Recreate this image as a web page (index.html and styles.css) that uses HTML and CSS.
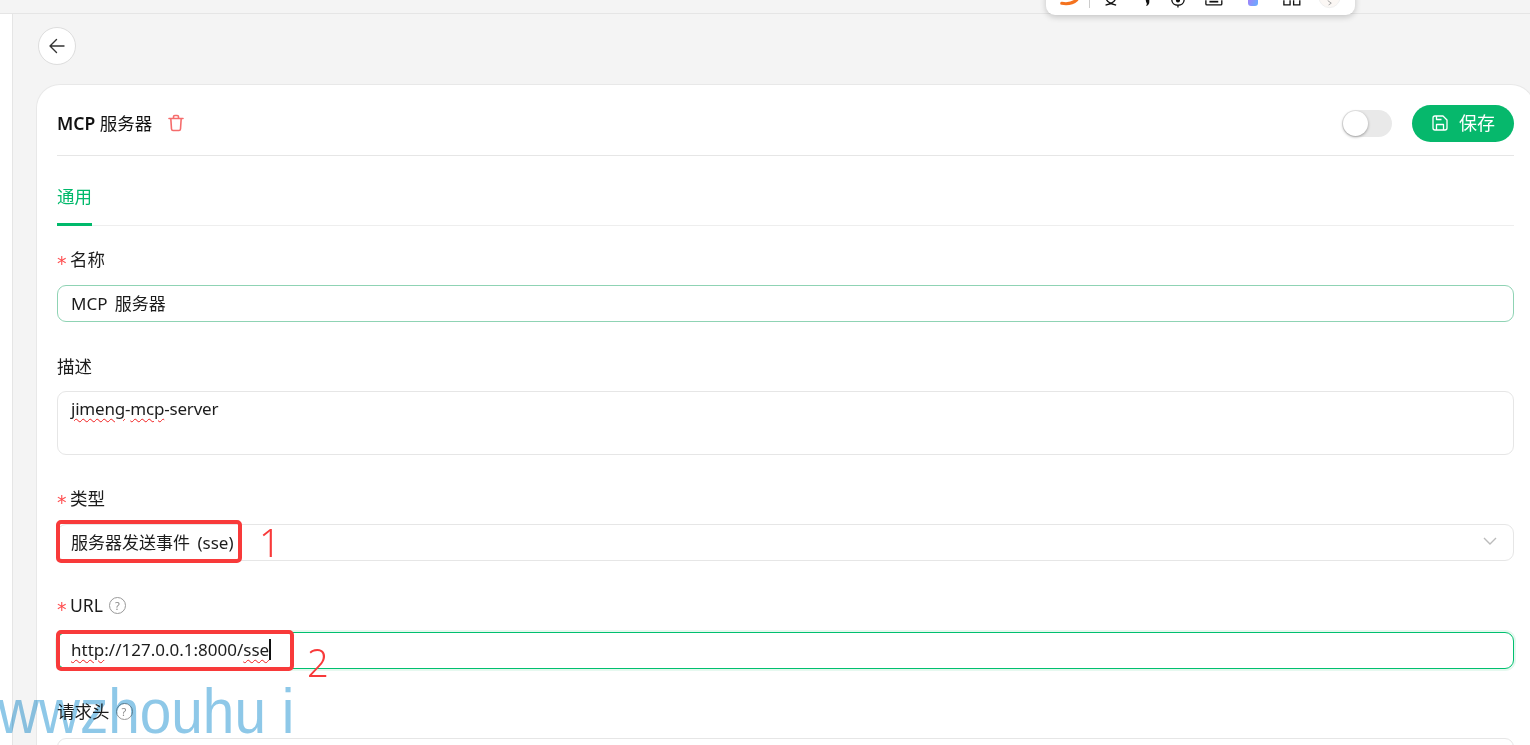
FILE: index.html
```html
<!DOCTYPE html>
<html lang="zh-CN">
<head>
  <meta charset="UTF-8" />
  <meta name="viewport" content="width=device-width, initial-scale=1.0"/>
  <title>MCP 服务器</title>
  <link rel="stylesheet" href="styles.css">
</head>
<body>
  <div class="topbar"></div>

  <div class="layout">
    <div class="sidebar"></div>
    <main class="main">
      <button class="back-btn" aria-label="back">
        <svg width="18" height="18" viewBox="0 0 18 18" fill="none" stroke="#333" stroke-width="1.4" stroke-linecap="round" stroke-linejoin="round"><path d="M16 9H2M8.500 2.500L2 9l6.500 6.500"/></svg>
      </button>

      <section class="card">
        <header class="card-head">
          <div class="title"><b>MCP</b> 服务器</div>
          <svg class="trash" width="16" height="18" viewBox="0 0 16 18" fill="none" stroke="#f56c6c" stroke-width="1.600" stroke-linejoin="round" stroke-linecap="round"><path d="M1 4.500h14M5.500 4.500V2.800c0-.8.500-1.300 1.300-1.300h2.400c.8 0 1.300.5 1.300 1.300v1.700M2.800 4.500l.7 10.500c.1.900.6 1.500 1.500 1.500h6c.9 0 1.400-.6 1.500-1.500l.7-10.500"/></svg>
          <div class="spacer"></div>
          <div class="toggle"><span class="knob"></span></div>
          <button class="save-btn">
            <svg width="16" height="16" viewBox="0 0 16 16" fill="none" stroke="#fff" stroke-width="1.300" stroke-linejoin="round"><path d="M1 3c0-1.100.9-2 2-2h8l4 4v8c0 1.100-.9 2-2 2H3c-1.100 0-2-.9-2-2z"/><path d="M4.500 15V9.500h7V15M4.500 1v3.500h5"/></svg>
            <span>保存</span>
          </button>
        </header>

        <nav class="tabs">
          <div class="tab active">通用</div>
        </nav>

        <form class="form">
          <div class="row">
            <label class="label"><span class="star">*</span>名称</label>
            <div class="input input-hover">MCP 服务器</div>
          </div>
          <div class="row row-desc">
            <label class="label">描述</label>
            <div class="input textarea"><span class="typo">jimeng</span>-<span class="typo">mcp</span>-server</div>
          </div>
          <div class="row">
            <label class="label"><span class="star">*</span>类型</label>
            <div class="input select">
              <span>服务器发送事件 (sse)</span>
              <svg class="chevron" width="14" height="8" viewBox="0 0 14 8" fill="none" stroke="#bbb" stroke-width="1.400"><path d="M1 1l6 6 6-6"/></svg>
            </div>
          </div>
          <div class="row row-url">
            <label class="label"><span class="star">*</span>URL<span class="help">?</span></label>
            <div class="input input-focus"><span class="typo">http</span>://127.0.0.1:8000/<span class="typo">sse</span><span class="caret"></span></div>
          </div>
          <div class="row row-last">
            <label class="label">请求头<span class="help">?</span></label>
            <div class="input input-cut"></div>
          </div>
        </form>
      </section>
    </main>
  </div>

  <!-- floating browser extension bar, cut by the top of the window -->
  <div class="ext-bar">
    <svg class="ext-logo" width="22" height="8" viewBox="0 0 22 8" fill="none" stroke="#f4721e" stroke-width="3.500" stroke-linecap="round"><path d="M2 5.500c6 1 12 .5 17-4"/></svg>
    <span class="ext-sep"></span>
    <svg width="20" height="7" viewBox="0 0 20 7" fill="none" stroke="#111" stroke-width="1.500"><path d="M5 0c1 3 5 5 11 6.500M15 0c-1 3-5 5-11 6.500"/></svg>
    <svg class="ext-comma" width="8" height="8" viewBox="0 0 8 8" fill="#111"><path d="M2 0h4v3c0 2-1 3.500-3 4.500l-.5-.5C3 6 3.500 5 3 4 2.500 3 2 2 2 0z"/></svg>
    <svg class="ext-mic" width="18" height="9" viewBox="0 0 18 9" fill="none" stroke="#111" stroke-width="1.500"><path d="M2 0c0 4 3 6.500 7 6.500S16 4 16 0M9 6.500V9"/><circle cx="9" cy="1" r="2.300" fill="#111" stroke="none"/></svg>
    <svg width="20" height="6" viewBox="0 0 20 6" fill="none" stroke="#111" stroke-width="1.500"><path d="M1 0v4c0 .8.500 1.200 1.200 1.200h15.600c.7 0 1.200-.4 1.200-1.200V0"/><path d="M5 1.500h10" stroke-width="2"/></svg>
    <span class="ext-gem"></span>
    <svg width="20" height="6" viewBox="0 0 20 6" fill="none" stroke="#111" stroke-width="1.500"><path d="M1 0v5.200h7V0M12 0v5.200h7V0"/></svg>
    <svg class="ext-round" width="26" height="9" viewBox="0 0 26 9" fill="#fbf7f4" stroke="#eee"><circle cx="13" cy="-4" r="12"/><path d="M11 0l4 3-3 2" fill="none" stroke="#999"/></svg>
  </div>

  <!-- annotations drawn on the screenshot -->
  <div class="mark mark-type"></div>
  <div class="mark mark-url"></div>
  <div class="num num-one">1</div>
  <div class="num num-two">2</div>
  <div class="watermark">wwzhouhu i</div>
</body>
</html>
```

FILE: styles.css
```css
* {
  box-sizing: border-box;
}

html, body {
  height: 745px;
}

body {
  margin: 0;
  overflow: hidden;
  position: relative;
  display: flex;
  flex-direction: column;
  background: #f4f4f4;
  color: #1c1c1c;
  font-family: "Noto Sans", "Noto Sans CJK SC", sans-serif;
  font-size: 17px;
}

.topbar {
  height: 14px;
  flex: none;
  background: #f4f4f4;
  border-bottom: 1px solid #e5e5e5;
}

.layout {
  flex: 1;
  display: flex;
  min-height: 0;
  overflow: hidden;
}

.sidebar {
  width: 13px;
  flex: none;
  background: #fff;
  border-right: 1px solid #e5e5e5;
}

.main {
  flex: 1;
  min-width: 0;
  height: 731px;
  overflow: hidden;
  padding: 13px 0 0 23px;
}

.back-btn {
  display: flex;
  align-items: center;
  justify-content: center;
  width: 38px;
  height: 38px;
  margin-left: 2px;
  padding: 0;
  background: #fff;
  border: 1px solid #ddd;
  border-radius: 50%;
}

/* Card */
.card {
  width: 1499px;
  height: 661px;
  margin-top: 19px;
  padding: 0 20px;
  background: #fff;
  border: 1px solid #e8e8e8;
  border-bottom: none;
  border-radius: 24px 24px 0 0;
  overflow: hidden;
}

.card-head {
  display: flex;
  align-items: center;
  height: 71px;
  padding-top: 6px;
  border-bottom: 1px solid #e6e6e6;
}

.title {
  padding-bottom: 2px;
  color: #111;
  font-size: 17.500px;
}

.title b {
  font-weight: 600;
}

.trash {
  margin-left: 16px;
}

.spacer {
  flex: 1;
}

.toggle {
  position: relative;
  width: 50px;
  height: 27px;
  background: #e9e9e9;
  border-radius: 14px;
}

.knob {
  position: absolute;
  left: 1px;
  top: 1px;
  width: 25px;
  height: 25px;
  background: #fff;
  border-radius: 50%;
  box-shadow: 0 1px 3px rgba(0, 0, 0, 0.35);
}

.save-btn {
  display: flex;
  align-items: center;
  gap: 11px;
  height: 37px;
  width: 102px;
  margin-left: 20px;
  padding: 0 0 0 20px;
  background: #06b86c;
  color: #fff;
  border: none;
  border-radius: 19px;
  font-family: inherit;
  font-size: 18px;
}

.save-btn span {
  padding-bottom: 2px;
}

/* Tabs */
.tabs {
  display: flex;
  height: 70px;
  border-bottom: 1px solid #eee;
}

.tab {
  height: 70px;
  padding-top: 27px;
  line-height: 26px;
  font-size: 17.500px;
}

.tab.active {
  color: #00b96b;
  border-bottom: 3px solid #00b96b;
}

/* Form */
.form {
  padding-top: 22px;
}

.row {
  margin-bottom: 33px;
}

.row-desc {
  margin-bottom: 32px;
}

.row-desc .label {
  margin-bottom: 12px;
}

.row-url {
  margin-bottom: 31px;
}

.row-url .label,
.row-last .label {
  margin-bottom: 14px;
}

.label {
  display: flex;
  align-items: center;
  height: 24px;
  margin-bottom: 13px;
  padding-bottom: 2px;
  font-size: 17.500px;
  line-height: 22px;
}

.star {
  width: 13px;
  padding-top: 7px;
  color: #ff4d4f;
  font-family: "DejaVu Sans", sans-serif;
  font-size: 19px;
}

.help {
  display: inline-flex;
  align-items: center;
  justify-content: center;
  width: 17px;
  height: 17px;
  margin-left: 6px;
  color: #888;
  border: 1.500px solid #999;
  border-radius: 50%;
  font-size: 11px;
  line-height: 1;
}

.input {
  display: flex;
  align-items: center;
  height: 37px;
  padding: 0 13px 3px;
  background: #fff;
  border: 1px solid #e6e6e6;
  border-radius: 9px;
  white-space: pre;
  word-spacing: 3px;
}

.input-hover {
  border-color: #8fd3b4;
}

.input-focus {
  border-color: #00c06f;
  box-shadow: 0 0 0 2px #e6f8ef;
}

.input-cut {
  height: 60px;
}

.textarea {
  display: block;
  height: 64px;
  padding-top: 4px;
  line-height: 26px;
  letter-spacing: -0.2px;
}

.select {
  justify-content: space-between;
}

.chevron {
  margin-right: 3px;
}

.typo {
  text-decoration: underline wavy #f01f1f 1px;
  text-underline-offset: 3px;
}

.caret {
  display: inline-block;
  width: 2px;
  height: 21px;
  background: #111;
}

/* Extension bar */
.ext-bar {
  position: absolute;
  top: -8px;
  left: 1046px;
  width: 309px;
  height: 23px;
  display: flex;
  align-items: flex-end;
  gap: 19px;
  padding: 0 14px 9px;
  background: #fff;
  border-radius: 0 0 9px 9px;
  box-shadow: 0 2px 6px rgba(0, 0, 0, 0.2);
}

.ext-logo {
  margin-right: -9px;
}

.ext-sep {
  width: 1px;
  height: 9px;
  margin: 0 -7px -2px 0;
  background: #ccc;
}

.ext-comma {
  margin: 0 0 -1px 5px;
}

.ext-mic {
  margin-bottom: -2px;
}

.ext-gem {
  width: 12px;
  height: 9px;
  margin: 0 6px;
  background: linear-gradient(120deg, #a97cf8, #62b0ff);
  border-radius: 0 0 3px 3px;
}

.ext-round {
  margin: 0 0 -3px -2px;
}

/* Annotations */
.mark {
  position: absolute;
  border: 4px solid #f83a3a;
  border-radius: 5px;
}

.mark-type {
  left: 56px;
  top: 520px;
  width: 186px;
  height: 43px;
}

.mark-url {
  left: 56px;
  top: 630px;
  width: 238px;
  height: 41px;
}

.num {
  position: absolute;
  color: #f83a3a;
  font-family: "Noto Sans", sans-serif;
  font-size: 38px;
  font-weight: 300;
  line-height: 1;
}

.num-one {
  left: 259px;
  top: 523px;
}

.num-two {
  left: 307px;
  top: 643px;
}

.watermark {
  position: absolute;
  left: -2px;
  top: 675px;
  color: #8ec8e8;
  font-family: "Liberation Sans", sans-serif;
  font-size: 63px;
  line-height: 72px;
  white-space: pre;
  transform: scaleX(0.9);
  transform-origin: left top;
  mix-blend-mode: multiply;
}
```
